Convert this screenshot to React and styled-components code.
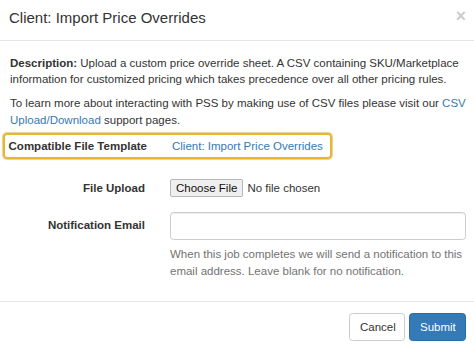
import React from "react";
import styled, { createGlobalStyle } from "styled-components";

const Global = createGlobalStyle`
  html, body { margin: 0; padding: 0; background: #fff; }
  body {
    font-family: "Liberation Sans", Arial, Helvetica, sans-serif;
    font-size: 11.5px;
    line-height: 16.7px;
    color: #333;
  }
  * { box-sizing: border-box; }
`;

const Modal = styled.div`
  width: 474px;
  height: 350px;
  background: #fff;
  display: flex;
  flex-direction: column;
`;

const Header = styled.div`
  height: 41px;
  padding: 7px 8px 0 9px;
  border-bottom: 1px solid #e5e5e5;
  display: flex;
  align-items: flex-start;
  justify-content: space-between;
`;

const Title = styled.h4`
  margin: 0;
  font-size: 15px;
  line-height: 21.4px;
  font-weight: 500;
  color: #333;
`;

const Close = styled.button`
  border: 0;
  background: transparent;
  padding: 0;
  margin-top: 1px;
  font-family: "Liberation Sans", Arial, sans-serif;
  font-size: 17.5px;
  font-weight: 700;
  line-height: 16px;
  color: #000;
  opacity: 0.2;
  text-shadow: 0 1px 0 #fff;
  cursor: pointer;
`;

const Body = styled.div`
  height: 260px;
  padding: 13.5px 6px 0 10px;
`;

const Para = styled.p`
  margin: 0 0 7.5px;
`;

const Link = styled.a`
  color: #337ab7;
  text-decoration: none;
`;

const Highlight = styled.div`
  margin: -3px 0 0 -7px;
  width: 329px;
  height: 26px;
  border: 2px solid #e6b82a;
  border-radius: 4px;
  box-shadow: 0 0 1px 1px rgba(190, 150, 30, 0.45);
  display: grid;
  grid-template-columns: 142px 1fr;
  column-gap: 25px;
  align-items: center;
`;

const Row = styled.div`
  display: grid;
  grid-template-columns: 135px 1fr;
  column-gap: 25px;
  align-items: ${(p) => (p.$top ? "start" : "center")};
  margin-top: ${(p) => p.$mt}px;
`;

const Label = styled.label`
  font-weight: 700;
  text-align: right;
  padding-top: ${(p) => p.$pt || 0}px;
`;

const FileField = styled.div`
  display: flex;
  align-items: center;
  gap: 4px;
`;

const FileButton = styled.button`
  font-family: "Liberation Sans", Arial, sans-serif;
  font-size: 11.5px;
  color: #111;
  height: 18px;
  padding: 0 5px;
  background: #efefef;
  border: 1px solid #b8b8b8;
  border-radius: 2px;
  line-height: 16px;
`;

const Input = styled.input`
  width: 296px;
  height: 28px;
  border: 1px solid #ccc;
  border-radius: 3.5px;
  box-shadow: inset 0 1px 1px rgba(0, 0, 0, 0.075);
  padding: 5px 10px;
  font-family: inherit;
  font-size: 11.5px;
  display: block;
`;

const Help = styled.p`
  margin: 6px 0 0;
  color: #737373;
  line-height: 16.2px;
`;

const Footer = styled.div`
  height: 49px;
  border-top: 1px solid #e5e5e5;
  padding: 11px 8px 0 0;
  display: flex;
  justify-content: flex-end;
  gap: 4px;
`;

const Btn = styled.button`
  height: 28px;
  padding: 0 10px;
  font-family: "Liberation Sans", Arial, sans-serif;
  font-size: 11.5px;
  border-radius: 3.5px;
  border: 1px solid ${(p) => (p.$primary ? "#2e6da4" : "#ccc")};
  background: ${(p) => (p.$primary ? "#337ab7" : "#fff")};
  color: ${(p) => (p.$primary ? "#fff" : "#333")};
  width: ${(p) => p.$w}px;
`;

export default function App() {
  return (
    <>
      <Global />
      <Modal>
        <Header>
          <Title>Client: Import Price Overrides</Title>
          <Close aria-label="Close">×</Close>
        </Header>
        <Body>
          <Para>
            <strong>Description:</strong> Upload a custom price override sheet. A CSV containing
            SKU/Marketplace information for customized pricing which takes precedence over all
            other pricing rules.
          </Para>
          <Para>
            To learn more about interacting with PSS by making use of CSV files please visit our{" "}
            <Link href="#">CSV Upload/Download</Link> support pages.
          </Para>
          <Highlight>
            <Label>Compatible File Template</Label>
            <Link href="#">Client: Import Price Overrides</Link>
          </Highlight>
          <Row $mt={20}>
            <Label>File Upload</Label>
            <FileField>
              <FileButton type="button">Choose File</FileButton>
              <span>No file chosen</span>
            </FileField>
          </Row>
          <Row $mt={15} $top>
            <Label $pt={5}>Notification Email</Label>
            <div>
              <Input type="email" />
              <Help>
                When this job completes we will send a notification to this email address. Leave
                blank for no notification.
              </Help>
            </div>
          </Row>
        </Body>
        <Footer>
          <Btn $w={56}>Cancel</Btn>
          <Btn $primary $w={57}>Submit</Btn>
        </Footer>
      </Modal>
    </>
  );
}
